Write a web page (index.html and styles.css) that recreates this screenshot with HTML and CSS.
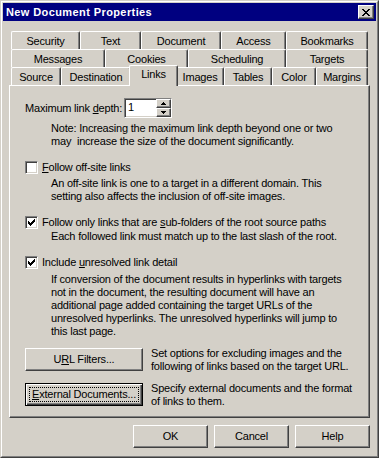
FILE: index.html
```html
<!DOCTYPE html>
<html>
<head>
<meta charset="utf-8">
<title>New Document Properties</title>
<link rel="stylesheet" href="styles.css">
</head>
<body>
<div class="window">
  <div class="frame">
    <div class="titlebar">
      <span class="title">New Document Properties</span>
      <span class="close-btn">
        <svg width="8" height="7" viewBox="0 0 8 7" shape-rendering="crispEdges"><path d="M0 0h2v1h-2z M6 0h2v1h-2z M1 1h2v1h-2z M5 1h2v1h-2z M2 2h4v1h-4z M3 3h2v1h-2z M2 4h4v1h-4z M1 5h2v1h-2z M5 5h2v1h-2z M0 6h2v1h-2z M6 6h2v1h-2z" fill="#000"/></svg>
      </span>
    </div>
    <div class="client">
      <div class="tabs">
        <div class="tab-row row1">
          <div class="tab">Security</div>
          <div class="tab">Text</div>
          <div class="tab">Document</div>
          <div class="tab">Access</div>
          <div class="tab">Bookmarks</div>
        </div>
        <div class="tab-row row2">
          <div class="tab">Messages</div>
          <div class="tab">Cookies</div>
          <div class="tab">Scheduling</div>
          <div class="tab">Targets</div>
        </div>
        <div class="tab-row row3">
          <div class="tab">Source</div>
          <div class="tab">Destination</div>
          <div class="tab tab-selected">Links</div>
          <div class="tab">Images</div>
          <div class="tab">Tables</div>
          <div class="tab">Color</div>
          <div class="tab">Margins</div>
        </div>
      </div>

      <div class="panel">
        <div class="depth-row">
          <span class="depth-label">Maximum link <u>d</u>epth:</span>
          <div class="spin">
            <span class="spin-value">1</span>
            <div class="spin-buttons">
              <span class="spin-btn"><svg width="5" height="3" viewBox="0 0 5 3" shape-rendering="crispEdges"><path d="M2 0h1v1h1v1h1v1h-5v-1h1v-1h1z" fill="#000"/></svg></span>
              <span class="spin-btn"><svg width="5" height="3" viewBox="0 0 5 3" shape-rendering="crispEdges"><path d="M0 0h5v1h-1v1h-1v1h-1v-1h-1v-1h-1z" fill="#000"/></svg></span>
            </div>
          </div>
        </div>
        <div class="desc note">Note: Increasing the maximum link depth beyond one or two<br>may&nbsp; increase the size of the document significantly.</div>

        <div class="check-row cb1">
          <span class="checkbox"></span>
          <span class="check-label"><u>F</u>ollow off-site links</span>
        </div>
        <div class="desc desc1">An off-site link is one to a target in a different domain. This<br>setting also affects the inclusion of off-site images.</div>

        <div class="check-row cb2">
          <span class="checkbox"><svg width="7" height="7" viewBox="0 0 7 7" shape-rendering="crispEdges"><path d="M0 2H1V3H2V4H3V3H4V2H5V1H6V0H7V3H6V4H5V5H4V6H3V7H2V6H1V5H0Z" fill="#000"/></svg></span>
          <span class="check-label">Follow only links that are <u>s</u>ub-folders of the root source paths</span>
        </div>
        <div class="desc desc2">Each followed link must match up to the last slash of the root.</div>

        <div class="check-row cb3">
          <span class="checkbox"><svg width="7" height="7" viewBox="0 0 7 7" shape-rendering="crispEdges"><path d="M0 2H1V3H2V4H3V3H4V2H5V1H6V0H7V3H6V4H5V5H4V6H3V7H2V6H1V5H0Z" fill="#000"/></svg></span>
          <span class="check-label">Include <u>u</u>nresolved link detail</span>
        </div>
        <div class="desc desc3">If conversion of the document results in hyperlinks with targets<br>not in the document, the resulting document will have an<br>additional page added containing the target URLs of the<br>unresolved hyperlinks. The unresolved hyperlinks will jump to<br>this last page.</div>

        <div class="cmd-row url-row">
          <span class="btn cmd-btn">U<u>R</u>L Filters...</span>
          <span class="cmd-text">Set options for excluding images and the<br>following of links based on the target URL.</span>
        </div>
        <div class="cmd-row ext-row">
          <span class="btn cmd-btn btn-default"><span class="focus-ring"><u>E</u>xternal Documents...</span></span>
          <span class="cmd-text">Specify external documents and the format<br>of links to them.</span>
        </div>
      </div>

      <div class="actions">
        <span class="btn">OK</span>
        <span class="btn">Cancel</span>
        <span class="btn">Help</span>
      </div>
    </div>
  </div>
</div>
</body>
</html>
```

FILE: styles.css
```css
* { box-sizing: border-box; }

html, body {
  margin: 0;
  padding: 0;
}

body {
  width: 379px;
  height: 458px;
  overflow: hidden;
  background: #d4d0c8;
  color: #000;
  font-family: "Liberation Sans", Arial, sans-serif;
  font-size: 11px;
  line-height: 13px;
  letter-spacing: -0.2px;
}

u { text-decoration: underline; text-underline-offset: 1px; }

.window {
  width: 379px;
  height: 458px;
  border: 1px solid;
  border-color: #d4d0c8 #404040 #404040 #d4d0c8;
  background: #d4d0c8;
}

.frame {
  height: 100%;
  border: 1px solid;
  border-color: #fff #808080 #808080 #fff;
  padding: 1px;
  display: flex;
  flex-direction: column;
}

.titlebar {
  height: 18px;
  flex: none;
  background: #000080;
  color: #fff;
  display: flex;
  align-items: center;
  justify-content: space-between;
  padding: 0 2px 0 3px;
}

.title {
  font-weight: bold;
  letter-spacing: 0.4px;
}

.close-btn {
  width: 16px;
  height: 14px;
  background: #d4d0c8;
  border: 1px solid;
  border-color: #fff #404040 #404040 #fff;
  box-shadow: inset -1px -1px #808080;
  display: flex;
  align-items: center;
  justify-content: center;
}
.close-btn svg { display: block; }

.client {
  flex: 1;
  display: flex;
  flex-direction: column;
  padding: 10px 6px 0;
}

/* tabs */
.tabs { padding: 0 2px; }

.tab-row {
  display: grid;
  height: 18px;
}
.row1 { grid-template-columns: 69px 61px 80px 65px 82px; }
.row2 { grid-template-columns: 94px 83px 98px 82px; }
.row3 { grid-template-columns: 50px 70px 45px 48px 48px 44px 52px; }

.tab {
  height: 18px;
  background: #d4d0c8;
  border: 1px solid;
  border-bottom: none;
  border-color: #fff #404040 #404040 #fff;
  border-radius: 2px 2px 0 0;
  box-shadow: inset -1px 0 #808080;
  text-align: center;
  padding-top: 3px;
  white-space: nowrap;
}

.tab-selected {
  position: relative;
  z-index: 2;
  height: 21px;
  margin: -2px -2px 0;
  padding-top: 2px;
}

/* panel */
.panel {
  height: 333px;
  flex: none;
  border: 1px solid;
  border-color: #fff #404040 #404040 #fff;
  box-shadow: inset -1px -1px #808080;
  padding: 12px 0 0 15px;
}

.depth-row {
  display: flex;
  align-items: center;
  height: 20px;
}
.depth-label { width: 99px; white-space: nowrap; }

.spin {
  width: 48px;
  height: 20px;
  display: flex;
  background: #fff;
  border: 1px solid;
  border-color: #808080 #fff #fff #808080;
  box-shadow: inset 1px 1px #404040, inset -1px -1px #d4d0c8;
}
.spin-value {
  flex: 1;
  padding: 2px 0 0 3px;
}
.spin-buttons {
  width: 15px;
  display: flex;
  flex-direction: column;
}
.spin-btn {
  flex: 1;
  background: #d4d0c8;
  border: 1px solid;
  border-color: #fff #404040 #404040 #fff;
  box-shadow: inset -1px -1px #808080;
  display: flex;
  align-items: center;
  justify-content: center;
}
.spin-btn svg { display: block; }

.desc {
  margin-left: 26px;
  white-space: nowrap;
}
.note { margin-top: 4px; }

.check-row {
  display: flex;
  align-items: center;
  gap: 4px;
  height: 13px;
  white-space: nowrap;
}
.checkbox {
  width: 13px;
  height: 13px;
  flex: none;
  background: #fff;
  border: 1px solid;
  border-color: #808080 #fff #fff #808080;
  box-shadow: inset 1px 1px #404040, inset -1px -1px #d4d0c8;
  display: flex;
  align-items: center;
  justify-content: center;
}
.checkbox svg { display: block; }

.cb1 { margin-top: 13px; }
.desc1 { margin-top: 3px; }
.cb2 { margin-top: 13px; }
.desc2 { margin-top: 1px; }
.cb3 { margin-top: 13px; }
.desc3 { margin-top: 4px; }

.cmd-row {
  display: flex;
  align-items: flex-start;
  gap: 8px;
  white-space: nowrap;
}
.url-row { margin-top: 10px; }
.ext-row { margin-top: 10px; }
.cmd-text { margin-top: -1px; }

.btn {
  width: 75px;
  height: 23px;
  flex: none;
  background: #d4d0c8;
  border: 1px solid;
  border-color: #fff #404040 #404040 #fff;
  box-shadow: inset -1px -1px #808080;
  display: flex;
  align-items: center;
  justify-content: center;
  white-space: nowrap;
}
.cmd-btn { width: 118px; }

.btn-default {
  border-color: #000;
  box-shadow: inset 1px 1px #fff, inset -1px -1px #404040, inset -2px -2px #808080;
}
.focus-ring {
  flex: 1;
  align-self: stretch;
  margin: 3px;
  border: 1px dotted #000;
  display: flex;
  align-items: center;
  justify-content: center;
}

.actions {
  display: flex;
  justify-content: flex-end;
  gap: 6px;
  margin-top: 7px;
}
```
